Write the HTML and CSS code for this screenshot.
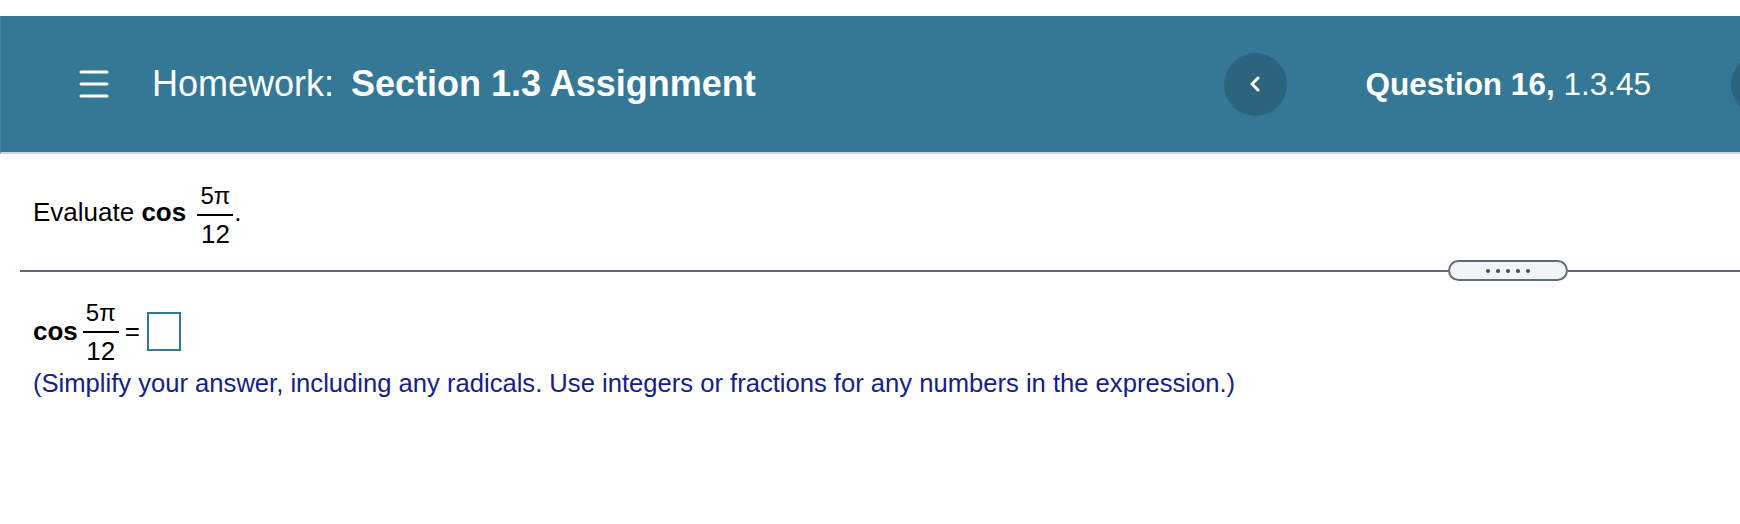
FILE: index.html
```html
<!DOCTYPE html>
<html lang="en">

<head>
    <meta charset="UTF-8">
    <meta name="viewport" content="width=device-width, initial-scale=1.0">
    <title>Homework: Section 1.3 Assignment</title>
    <link rel="stylesheet" href="styles.css">
</head>

<body>
    <header class="topbar">
        <div class="title-group">
            <button class="menu-btn" aria-label="Menu">
                <svg width="30" height="30" viewBox="0 0 30 30">
                    <path d="M2 3H28M2 15H28M2 27H28" stroke="#fff" stroke-width="3" stroke-linecap="round" fill="none" />
                </svg>
            </button>
            <h1 class="title">Homework: <b>Section 1.3 Assignment</b></h1>
        </div>
        <div class="nav-group">
            <button class="circle-btn" aria-label="Previous question">
                <svg width="12" height="16" viewBox="0 0 12 16">
                    <polyline points="9,2 3,8 9,14" stroke="#fff" stroke-width="3" stroke-linecap="round" stroke-linejoin="round" fill="none" />
                </svg>
            </button>
            <div class="question-id"><b>Question 16,</b> 1.3.45</div>
            <button class="circle-btn next" aria-label="Next question"></button>
        </div>
    </header>

    <main class="content">
        <p class="prompt">
            Evaluate <b>cos</b>
            <span class="frac"><span class="num">5π</span><span class="den">12</span></span>.
        </p>

        <div class="divider">
            <span class="rule"></span>
            <button class="more-btn" aria-label="More">
                <i></i><i></i><i></i><i></i><i></i>
            </button>
            <span class="rule tail"></span>
        </div>

        <div class="answer">
            <b>cos</b>
            <span class="frac"><span class="num">5π</span><span class="den">12</span></span>
            <span class="eq">=</span>
            <span class="answer-box"></span>
        </div>
        <p class="hint">(Simplify your answer, including any radicals. Use integers or fractions for any numbers in the expression.)</p>
    </main>
</body>

</html>
```

FILE: styles.css
```css
body {
    font-family: 'Liberation Sans', Arial, Helvetica, sans-serif;
    background-color: #fff;
    color: #000;
    margin: 0;
    overflow: hidden;
}

.topbar {
    margin-top: 16px;
    height: 136px;
    background-color: #347896;
    border-left: 1px solid #4b849e;
    border-bottom: 2px solid #ced5da;
    display: flex;
    align-items: center;
    overflow: hidden;
    color: #fff;
}

.title-group {
    flex: 1;
    display: flex;
    align-items: center;
    padding-left: 78px;
}

.menu-btn {
    background: none;
    border: none;
    padding: 0;
    width: 30px;
    height: 30px;
    display: flex;
}

.title {
    margin: 0 0 0 43px;
    font-size: 36px;
    font-weight: normal;
    word-spacing: 7px;
}

.title b {
    word-spacing: 0;
}

.nav-group {
    display: flex;
    align-items: center;
    margin-right: -54px;
}

.circle-btn {
    width: 63px;
    height: 63px;
    border-radius: 50%;
    border: none;
    padding: 0;
    background-color: #2c637f;
    display: flex;
    align-items: center;
    justify-content: center;
}

.circle-btn.next {
    margin-left: 80px;
}

.question-id {
    margin-left: 79px;
    font-size: 31.5px;
}

.content {
    padding: 0 0 0 20px;
}

.prompt {
    margin: 23px 0 0 13px;
    font-size: 26px;
}

.frac {
    display: inline-flex;
    flex-direction: column;
    align-items: stretch;
    text-align: center;
    vertical-align: middle;
    margin: 0 1px 0 4px;
}

.num {
    font-size: 24px;
    line-height: 37px;
    padding: 0 3px;
    border-bottom: 2px solid #000;
}

.den {
    font-size: 26px;
    line-height: 36px;
}

.divider {
    display: flex;
    align-items: center;
    margin-top: 8px;
}

.rule {
    flex: 1;
    height: 2px;
    background-color: #5f6b78;
}

.rule.tail {
    flex: 0 0 172px;
}

.more-btn {
    width: 120px;
    height: 21px;
    border: 2px solid #5f6b78;
    border-radius: 11px;
    background-color: #f3f4f6;
    display: flex;
    align-items: center;
    justify-content: center;
    gap: 6px;
    padding: 0;
}

.more-btn i {
    width: 4px;
    height: 4px;
    border-radius: 50%;
    background-color: #454d56;
}

.answer {
    margin: 13px 0 0 13px;
    font-size: 26px;
    display: flex;
    align-items: center;
}

.answer .frac {
    margin: 0 0 0 5px;
}

.eq {
    margin-left: 6px;
}

.answer-box {
    width: 30px;
    height: 35px;
    border: 2px solid #347896;
    margin-left: 7px;
}

.hint {
    margin: 0 0 0 13px;
    font-size: 25.6px;
    color: #14208c;
}
```
